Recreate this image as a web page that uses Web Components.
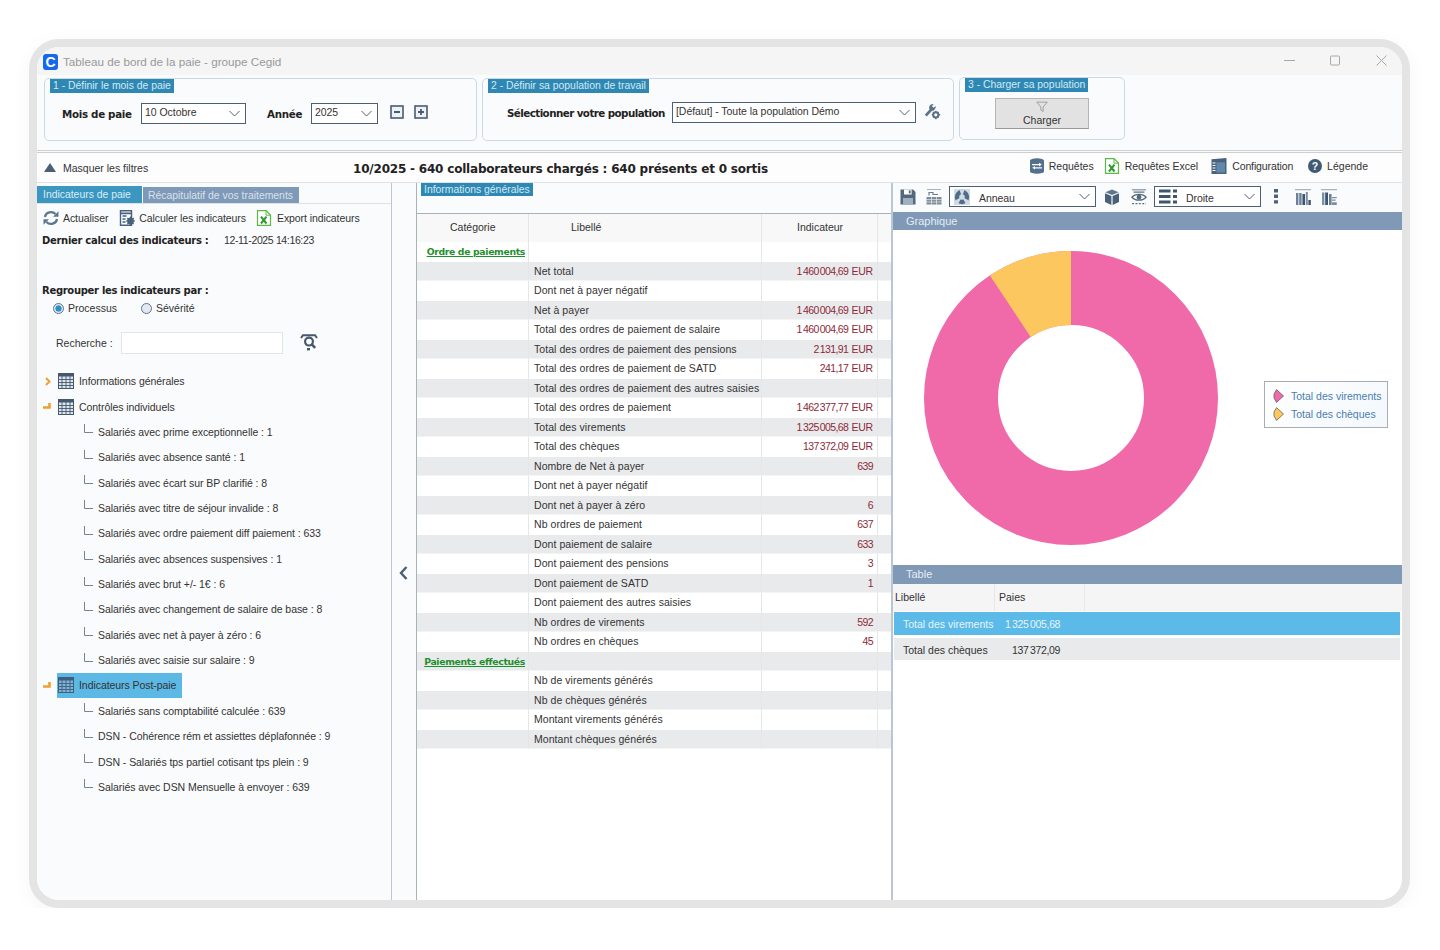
<!DOCTYPE html>
<html lang="fr">
<head>
<meta charset="utf-8">
<title>Tableau de bord de la paie</title>
<style>
  html, body { margin: 0; background: #fff; }
  body { padding: 39px 0 0 29px; font: 10.5px "Liberation Sans", Arial, sans-serif; color: #333; }
</style>
</head>
<body>
<cg-window>
  <cg-titlebar slot="title" text="Tableau de bord de la paie - groupe Cegid"></cg-titlebar>

  <cg-filters slot="filters">
    <cg-group label="1 - Définir le mois de paie" w="433" pad="10px 0 0 17px">
      <cg-bold style="width:79px">Mois de paie</cg-bold>
      <cg-select w="105">10 Octobre</cg-select>
      <cg-bold style="width:44px;margin-left:21px">Année</cg-bold>
      <cg-select w="67">2025</cg-select>
      <cg-icon name="minus" size="14" style="margin:-3px 0 0 12px"></cg-icon>
      <cg-icon name="plus" size="14" style="margin:-3px 0 0 10px"></cg-icon>
    </cg-group>
    <cg-group label="2 - Définir sa population de travail" w="472" pad="9px 0 0 24px" shift="0">
      <cg-bold style="width:165px;letter-spacing:-.55px">Sélectionner votre population</cg-bold>
      <cg-select w="244">[Défaut] - Toute la population Démo</cg-select>
      <cg-icon name="wrench" size="17" style="margin:-2px 0 0 8px"></cg-icon>
    </cg-group>
    <cg-group label="3 - Charger sa population" w="166" pad="6px 0 0 35px" shift="-1">
      <cg-charge></cg-charge>
    </cg-group>
  </cg-filters>

  <cg-statusbar slot="status" headline="10/2025 - 640 collaborateurs chargés : 640 présents et 0 sortis">
    <cg-action icon="requetes" gap="4" style="margin-right:10px">Requêtes</cg-action>
    <cg-action icon="excel" gap="5" style="margin-right:13px">Requêtes Excel</cg-action>
    <cg-action icon="config" gap="5" style="margin-right:14px;letter-spacing:-.12px">Configuration</cg-action>
    <cg-action icon="help" gap="4" style="margin-right:34px">Légende</cg-action>
  </cg-statusbar>

  <cg-left slot="left"></cg-left>
  <cg-splitter slot="splitter"></cg-splitter>
  <cg-grid slot="center"></cg-grid>
  <cg-chart slot="right"></cg-chart>
</cg-window>

<script>
const ICONS = {
  grid: `<rect x=".5" y=".5" width="15" height="15" fill="#dfe5ec" stroke="#46586e"/><rect x="0" y="0" width="16" height="3.5" fill="#46586e"/><path d="M4 3v13M8 3v13M12 3v13M0 6.5h16M0 9.5h16M0 12.5h16" stroke="#46586e" stroke-width=".9"/>`,
  gridSel: `<rect x=".5" y=".5" width="15" height="15" fill="#7fb4d4" stroke="#3f5f7e"/><rect x="0" y="0" width="16" height="3.5" fill="#3f5f7e"/><path d="M4 3v13M8 3v13M12 3v13M0 6.5h16M0 9.5h16M0 12.5h16" stroke="#3f5f7e" stroke-width=".9"/>`,
  refresh: `<path d="M2 7a6 5.5 0 0 1 10.5-3" fill="none" stroke="#5c7690" stroke-width="2.2"/><path d="M15.5 1.2v5.6H10z" fill="#5c7690"/><path d="M14 9a6 5.5 0 0 1-10.5 3" fill="none" stroke="#5c7690" stroke-width="2.2"/><path d="M.5 14.8V9.2H6z" fill="#5c7690"/>`,
  calc: `<path d="M1.5.8h11v14.4h-11z" fill="#fff" stroke="#46627f" stroke-width="1.4"/><path d="M1 3.4h12" stroke="#46627f" stroke-width="1.6"/><path d="M3.5 6h4M3.5 9h3M3.5 12h3" stroke="#46627f" stroke-width="1.6"/><circle cx="11.5" cy="11" r="3.4" fill="#46627f"/><circle cx="11.5" cy="11" r="1.3" fill="#fff"/><path d="M11.5 6.4v9.2M6.9 11h9.2M8.3 7.8l6.4 6.4M14.7 7.8l-6.4 6.4" stroke="#46627f" stroke-width="1.1"/>`,
  excel: `<path d="M1.5.7h8.6l4.4 4.4v10.2h-13z" fill="#fff" stroke="#5cb947" stroke-width="1.2"/><path d="M10 .7v4.5h4.5" fill="none" stroke="#5cb947"/><path d="M5 6.7l5.5 6.8M10.5 6.7L5 13.5" stroke="#2c9a2c" stroke-width="2"/>`,
  requetes: `<ellipse cx="8" cy="2.6" rx="7" ry="2.4" fill="#53708d"/><rect x="1" y="2.6" width="14" height="11" fill="#53708d"/><ellipse cx="8" cy="13.4" rx="7" ry="2.4" fill="#53708d"/><path d="M3 6.6h8M13 9.8H5" stroke="#fff" stroke-width="1.2"/><path d="M10 4.8l2.8 1.8L10 8.4zM6 8l-2.8 1.8L6 11.6z" fill="#fff"/>`,
  config: `<path d="M.5 1.2L15.5 0v16H.5z" fill="#46627f"/><rect x="5.4" y="4.3" width="8.6" height="10.3" fill="#6287a9"/><path d="M1.5 5h3M1.5 7.5h3M1.5 10h3M1.5 12.5h3" stroke="#fff" stroke-width="1"/>`,
  help: `<circle cx="8" cy="8" r="7" fill="#3f5a75"/><text x="8" y="11.6" text-anchor="middle" font-family="Liberation Sans" font-weight="bold" font-size="10.5" fill="#fff">?</text>`,
  minus: `<rect x="1" y="1" width="12" height="12" fill="#eef2f6" stroke="#4a5c70" stroke-width="1.6"/><path d="M4 7h6" stroke="#4a5c70" stroke-width="1.8"/>`,
  plus: `<rect x="1" y="1" width="12" height="12" fill="#eef2f6" stroke="#4a5c70" stroke-width="1.6"/><path d="M4 7h6M7 4v6" stroke="#4a5c70" stroke-width="1.8"/>`,
  wrench: `<path d="M1.8 12.6L7.4 6.4" stroke="#5c7287" stroke-width="2.8" fill="none"/><path d="M6 7.2a3.8 3.8 0 0 1 3.6-6.2L8 3.2l1.6 1.5 2-1.8a3.8 3.8 0 0 1-5.6 4.3z" fill="#5c7287"/><circle cx="11.8" cy="11.8" r="2.6" fill="none" stroke="#5c7287" stroke-width="2"/><path d="M11.8 7.8v1.4M11.8 14.4v1.8M7.8 11.8h1.4M14.4 11.8h1.8M9 9l1 1M13.6 13.6l1 1M14.6 9l-1 1M10 13.6l-1 1" stroke="#5c7287" stroke-width="1.4"/>`,
  lens: `<path d="M1 4L3 1.2h12L17 4" fill="none" stroke="#46586e" stroke-width="2"/><circle cx="9" cy="7.6" r="3.9" fill="#fff" stroke="#46586e" stroke-width="2.2"/><path d="M12 10.6l3.2 3.2" stroke="#46586e" stroke-width="2.6"/><path d="M7 14h3v2.4H7z" fill="#46586e"/>`,
  save: `<path d="M.5.5h12.6l2.4 2.4v12.6H.5z" fill="#51687f"/><rect x="4" y=".5" width="7.6" height="5" fill="#fff"/><rect x="8.8" y="1.4" width="1.8" height="3" fill="#51687f"/><rect x="3" y="9" width="10" height="6.5" fill="#9fb0c1"/>`,
  table: `<path d="M1 .5h14" stroke="#a9b3bd"/><path d="M3 6.5V3.5h4v2h5" fill="none" stroke="#6b7f93" stroke-width="1.2"/><rect x=".5" y="8" width="15" height="7.5" fill="#7d8b99"/><path d="M5.5 8v8M10.5 8v8M0 10.6h16M0 13h16" stroke="#dfe3e7" stroke-width=".8"/>`,
  ring: `<rect width="16" height="16" fill="#d2dbe4"/><circle cx="8" cy="8" r="5" fill="none" stroke="#4f6d8a" stroke-width="4.4"/><path d="M8 8L5.6 1h4.8zM8 8l6.6 3.2-2.6 3.8zM8 8l-6.6 3.2L4 15z" fill="#d2dbe4"/>`,
  cube: `<path d="M8 .6l6.6 2.6L8 5.9 1.4 3.2z" fill="#5c7590"/><path d="M1 4.2l6.4 2.7V16L1 12.9z" fill="#4a6078"/><path d="M15 4.2L8.6 6.9V16l6.4-3.1z" fill="#4a6078"/>`,
  eye: `<path d="M1 .8h14" stroke="#9aa6b1" stroke-width="1.4"/><path d="M2.5 3.2h11" stroke="#5c7287" stroke-width="1.2"/><path d="M1 8.2C4 4.4 12 4.4 15 8.2 12 12 4 12 1 8.2z" fill="#fff" stroke="#55697d" stroke-width="1.4"/><circle cx="8" cy="8.2" r="2.4" fill="#55697d"/><path d="M1 14.6h14" stroke="#5c7287" stroke-width="1.4" stroke-dasharray="2 1.4"/>`,
  list: `<path d="M0 2h11.5M0 7.5h11.5M0 13h11.5" stroke="#3f566e" stroke-width="2.8"/><path d="M14 2h4M14 7.5h4M14 13h4" stroke="#3f566e" stroke-width="2.8"/>`,
  dots: `<path d="M3 0h4v3.4H3zM3 5.6h4V9H3zM3 11.2h4v3.4H3z" fill="#4c6279"/>`,
  bars: `<path d="M0 .6h16" stroke="#a9b3bd" stroke-width="1.2"/><path d="M1 4h2.4v12H1zM4.2 4h2.4v12H4.2z" fill="#6b8199"/><path d="M7.4 5h2.6v11H7.4z" fill="#3d566f"/><path d="M10.8 3h2v13h-2z" fill="#7b90a6"/><path d="M13.4 11h2.4v5h-2.4z" fill="#3d566f"/>`,
  barsH: `<path d="M0 .6h16" stroke="#a9b3bd" stroke-width="1.2"/><path d="M1 3.6h2.4V16H1z" fill="#7b90a6"/><path d="M4.2 3.6h2.8V16H4.2z" fill="#3d566f"/><path d="M8 5h2.6v11H8z" fill="#6b8199"/><path d="M11 8h4.8v1.2H11zM11 10.6h3.6v1.2H11zM11 13.2h4.8V16H11z" fill="#7b90a6"/>`,
  funnel: `<path d="M1 1.5h14L9.5 8v6L6.5 12V8z" fill="none" stroke="#8b8b8b"/>`
};

function shell(host, html) {
  host.attachShadow({ mode: "open" }).innerHTML = html;
}

class CgIcon extends HTMLElement {
  connectedCallback() {
    const size = this.getAttribute("size") || 16;
    const name = this.getAttribute("name");
    const vb = { list: "0 0 18 15", dots: "0 0 10 15", plus: "0 0 14 14", minus: "0 0 14 14", wrench: "0 0 17 17", lens: "0 0 18 17" }[name] || "0 0 16 16";
    shell(this, `<style>:host{display:inline-flex;flex:none}svg{display:block}</style>
      <svg width="${this.getAttribute("w") || size}" height="${size}" viewBox="${vb}">${ICONS[name]}</svg>`);
  }
}

class CgWindow extends HTMLElement {
  constructor() {
    super();
    shell(this, `<style>
      :host{display:block;box-sizing:border-box;width:1381px;height:869px;border:8px solid #e4e4e4;border-radius:30px;background:#e4e4e4;box-shadow:0 5px 22px rgba(0,0,0,.04)}
      .in{height:100%;border-radius:22px;overflow:hidden;background:#fafbfc;display:flex;flex-direction:column}
      .work{flex:1;min-height:0;display:grid;grid-template-columns:355px 24px 477px 1fr;background:#fafbfc}
    </style>
    <div class="in">
      <slot name="title"></slot>
      <slot name="filters"></slot>
      <slot name="status"></slot>
      <div class="work">
        <slot name="left"></slot><slot name="splitter"></slot><slot name="center"></slot><slot name="right"></slot>
      </div>
    </div>`);
  }
}

class CgTitlebar extends HTMLElement {
  connectedCallback() {
    shell(this, `<style>
      :host{display:flex;align-items:center;height:28px;background:#f5f5f5;padding-left:6px;font:11.7px "Liberation Sans",sans-serif;color:#999}
      .logo{width:15px;height:16px;border-radius:3px;background:#1467ee;color:#fff;font:bold 14px/16px "Liberation Sans",sans-serif;text-align:center;margin:1px 5px 0 0}
      .sp{flex:1}
      svg{display:block}
    </style>
    <span class="logo">C</span><span>${this.getAttribute("text")}</span><span class="sp"></span>
    <svg width="113" height="12" viewBox="0 0 113 12" fill="none" stroke="#a8a8a8" style="margin:-3px 5px 0 0">
      <path d="M0 6.5h11"/><rect x="46.5" y="2" width="9" height="9" rx="1"/><path d="M92.5 1.5l10 10M102.5 1.5l-10 10"/>
    </svg>`);
  }
}

class CgFilters extends HTMLElement {
  constructor() {
    super();
    shell(this, `<style>
      :host{display:flex;gap:5px;box-sizing:border-box;height:78px;padding:3px 0 0 7px;background:#fafbfc;border-bottom:3px double #cfcfcf}
    </style><slot></slot>`);
  }
}

class CgGroup extends HTMLElement {
  connectedCallback() {
    const shift = this.getAttribute("shift") || 0;
    shell(this, `<style>
      :host{display:block;box-sizing:border-box;width:${this.getAttribute("w")}px;height:63px;border:1px solid #c9d9e4;border-radius:5px;margin-top:${shift}px}
      .lab{display:inline-block;background:#2f88b3;color:#d2e9f4;font:10.4px/14px "Liberation Sans",sans-serif;padding:0 3px;margin-left:5px;vertical-align:top}
      .body{display:flex;align-items:center;padding:${this.getAttribute("pad")}}
    </style>
    <span class="lab">${this.getAttribute("label")}</span>
    <div class="body"><slot></slot></div>`);
  }
}

class CgBold extends HTMLElement {
  constructor() {
    super();
    shell(this, `<style>:host{display:inline-block;flex:none;padding-top:1px;font:bold 10.3px "DejaVu Sans",sans-serif;letter-spacing:-.3px;color:#222;white-space:nowrap}</style><slot></slot>`);
  }
}

class CgSelect extends HTMLElement {
  connectedCallback() {
    shell(this, `<style>
      :host{display:flex;align-items:center;flex:none;box-sizing:border-box;width:${this.getAttribute("w")}px;height:21px;border:1px solid #4c5f74;background:#fff;padding:0 5px 0 3px;font:10.5px "Liberation Sans",sans-serif;letter-spacing:-.05px;color:#333}
      .t{flex:1;white-space:nowrap;margin-top:-3px}
      ::slotted(cg-icon){margin-right:9px}
    </style><slot name="icon"></slot><span class="t"><slot></slot></span>
    <svg width="11" height="7" viewBox="0 0 11 7" fill="none" stroke="#4c5f74"><path d="M.5 1l5 5 5-5"/></svg>`);
  }
}

class CgCharge extends HTMLElement {
  constructor() {
    super();
    shell(this, `<style>
      :host{display:flex;flex-direction:column;align-items:center;box-sizing:border-box;width:94px;height:31px;background:#e2e2e2;border:1px solid #b5b5b5;border-bottom-color:#999;padding-top:2px;font:10.5px/12px "Liberation Sans",sans-serif;color:#333}
    </style><cg-icon name="funnel" size="12" w="14"></cg-icon><span style="margin-top:1px">Charger</span>`);
  }
}

class CgAction extends HTMLElement {
  connectedCallback() {
    const gap = this.getAttribute("gap") || 4;
    shell(this, `<style>
      :host{display:inline-flex;align-items:center;gap:${gap}px;white-space:nowrap;font:10.5px "Liberation Sans",sans-serif;color:#333}
    </style><cg-icon name="${this.getAttribute("icon")}"></cg-icon><slot></slot>`);
  }
}

class CgStatusbar extends HTMLElement {
  connectedCallback() {
    shell(this, `<style>
      :host{display:flex;align-items:center;box-sizing:border-box;height:30px;padding-left:7px;background:#fdfdfe;border-bottom:1px solid #dfe3e7;font:10.5px "Liberation Sans",sans-serif;color:#333}
      .tri{width:0;height:0;border:6px solid transparent;border-top:0;border-bottom:9px solid #4b6075;margin-right:7px}
      .mask{width:290px;white-space:nowrap}
      h1{margin:0;font:bold 12px "DejaVu Sans",sans-serif;letter-spacing:-.2px;color:#222;white-space:nowrap;margin-top:2px}
      .sp{flex:1}
      .r{display:flex;align-items:center;margin-top:-3px}
    </style>
    <span class="tri"></span><span class="mask">Masquer les filtres</span>
    <h1>${this.getAttribute("headline")}</h1><span class="sp"></span>
    <div class="r"><slot></slot></div>`);
  }
}

class CgRadio extends HTMLElement {
  connectedCallback() {
    const on = this.hasAttribute("checked");
    shell(this, `<style>
      :host{display:inline-flex;align-items:center;gap:4px}
      i{box-sizing:border-box;width:11px;height:11px;border-radius:50%;border:1px solid #5c7690;background:${on ? "radial-gradient(circle,#2f8fc4 0 2.8px,#d8e6f2 3.4px)" : "#e6e8f0"}}
    </style><i></i><slot></slot>`);
  }
}

class CgTreeRow extends HTMLElement {
  connectedCallback() {
    const kind = this.getAttribute("kind");
    const sel = this.hasAttribute("selected");
    const mark = kind === "closed"
      ? `<svg class="m" width="6" height="9" viewBox="0 0 6 9" style="margin:0 0 0 8px"><path d="M1 1l3.5 3.5L1 8" fill="none" stroke="#f0a030" stroke-width="2"/></svg>`
      : `<svg class="m" width="8" height="7" viewBox="0 0 8 7" style="margin:-2px 0 0 6px"><path d="M0 5.5h6.5V1" fill="none" stroke="#f0a030" stroke-width="2.6"/></svg>`;
    const parent = `${mark}<span class="hl" style="margin-left:6px"><cg-icon name="${sel ? "gridSel" : "grid"}"></cg-icon><span class="t"><slot></slot></span></span>`;
    const child = `<svg width="9" height="10" viewBox="0 0 9 10" style="margin:-5px 5px 0 47px"><path d="M.5 0v8.5H9" fill="none" stroke="#75848f"/></svg><span><slot></slot></span>`;
    shell(this, `<style>
      :host{display:flex;align-items:center;height:25.36px;white-space:nowrap;font:10.5px "Liberation Sans",sans-serif;letter-spacing:-.06px;color:#333}
      .hl{display:flex;align-items:center;height:100%;padding-right:6px;${sel ? "background:#5cb8e4;" : ""}}
      cg-icon{margin-left:1px}
      .t{margin-left:5px}
    </style>${kind === "child" ? child : parent}`);
  }
}

class CgLeft extends HTMLElement {
  connectedCallback() {
    const tree = [
      ["closed", "Informations générales"],
      ["open", "Contrôles individuels"],
      ["child", "Salariés avec prime exceptionnelle : 1"],
      ["child", "Salariés avec absence santé : 1"],
      ["child", "Salariés avec écart sur BP clarifié : 8"],
      ["child", "Salariés avec titre de séjour invalide : 8"],
      ["child", "Salariés avec ordre paiement diff paiement : 633"],
      ["child", "Salariés avec absences suspensives : 1"],
      ["child", "Salariés avec brut +/- 1€ : 6"],
      ["child", "Salariés avec changement de salaire de base : 8"],
      ["child", "Salariés avec net à payer à zéro : 6"],
      ["child", "Salariés avec saisie sur salaire : 9"],
      ["open", "Indicateurs Post-paie", true],
      ["child", "Salariés sans comptabilité calculée : 639"],
      ["child", "DSN - Cohérence rém et assiettes déplafonnée : 9"],
      ["child", "DSN - Salariés tps partiel cotisant tps plein : 9"],
      ["child", "Salariés avec DSN Mensuelle à envoyer : 639"]
    ];
    shell(this, `<style>
      :host{display:block;box-sizing:border-box;border-right:1px solid #b9c6d2;background:#fafbfc;font:10.5px "Liberation Sans",sans-serif;color:#333;min-height:0}
      .tabs{display:flex;align-items:flex-end;height:20px;border-bottom:1px solid #e0e3e6}
      .tabs span{display:block;white-space:nowrap}
      .a{background:#3b96c0;color:#d8eef8;width:105px;height:17px;line-height:17px;padding-left:6px;box-sizing:border-box;font-size:10.4px}
      .b{background:#7f99b8;color:#d9e2ec;width:156px;height:16px;line-height:17px;padding-left:5px;margin-left:1px;box-sizing:border-box;font-size:10.4px}
      .tools{display:flex;align-items:center;padding:5px 0 0 6px;height:18px;letter-spacing:-.08px}
      .calc{display:flex;align-items:baseline;padding:7px 0 0 5px;height:15px}
      .calc span{letter-spacing:-.36px}
      .grp{padding:35px 0 0 5px;height:14px}
      .rad{display:flex;gap:24px;padding:3px 0 0 16px;height:14px}
      .search{display:flex;align-items:center;padding:16px 0 0 19px;height:23px}
      .input{box-sizing:border-box;width:162px;height:22px;background:#fff;border:1px solid #e3e5e8;margin:0 17px 0 8px}
      .tree{padding-top:14.5px}
    </style>
    <div class="tabs"><span class="a">Indicateurs de paie</span><span class="b">Récapitulatif de vos traitements</span></div>
    <div class="tools">
      <cg-action icon="refresh" style="margin-right:11px">Actualiser</cg-action>
      <cg-action icon="calc" style="margin-right:10px">Calculer les indicateurs</cg-action>
      <cg-action icon="excel" gap="5">Export indicateurs</cg-action>
    </div>
    <div class="calc"><cg-bold style="width:182px;font-size:10px;padding-top:0">Dernier calcul des indicateurs :</cg-bold><span>12-11-2025 14:16:23</span></div>
    <div class="grp"><cg-bold style="font-size:10px;padding-top:0">Regrouper les indicateurs par :</cg-bold></div>
    <div class="rad"><cg-radio checked>Processus</cg-radio><cg-radio>Sévérité</cg-radio></div>
    <div class="search"><span>Recherche :</span><span class="input"></span><cg-icon name="lens" size="17" w="18"></cg-icon></div>
    <div class="tree">${tree.map(([k, t, s]) => `<cg-tree-row kind="${k}"${s ? " selected" : ""}>${t}</cg-tree-row>`).join("")}</div>`);
  }
}

class CgSplitter extends HTMLElement {
  constructor() {
    super();
    shell(this, `<style>
      :host{display:flex;align-items:center;justify-content:center;background:#fafbfc;padding:62px 1px 0 0;box-sizing:border-box}
    </style><svg width="9" height="14" viewBox="0 0 9 14"><path d="M7.5 1L2 7l5.5 6" fill="none" stroke="#4a5f75" stroke-width="2.4"/></svg>`);
  }
}

class CgGrid extends HTMLElement {
  connectedCallback() {
    const E = ` <span class="cur">EUR</span>`;
    const rows = [
      ["c", "Ordre de paiements"],
      ["", "Net total", "1 460 004,69" + E],
      ["", "Dont net à payer négatif"],
      ["", "Net à payer", "1 460 004,69" + E],
      ["", "Total des ordres de paiement de salaire", "1 460 004,69" + E],
      ["", "Total des ordres de paiement des pensions", "2 131,91" + E],
      ["", "Total des ordres de paiement de SATD", "241,17" + E],
      ["", "Total des ordres de paiement des autres saisies"],
      ["", "Total des ordres de paiement", "1 462 377,77" + E],
      ["", "Total des virements", "1 325 005,68" + E],
      ["", "Total des chèques", "137 372,09" + E],
      ["", "Nombre de Net à payer", "639"],
      ["", "Dont net à payer négatif"],
      ["", "Dont net à payer à zéro", "6"],
      ["", "Nb ordres de paiement", "637"],
      ["", "Dont paiement de salaire", "633"],
      ["", "Dont paiement des pensions", "3"],
      ["", "Dont paiement de SATD", "1"],
      ["", "Dont paiement des autres saisies"],
      ["", "Nb ordres de virements", "592"],
      ["", "Nb ordres en chèques", "45"],
      ["c", "Paiements effectués"],
      ["", "Nb de virements générés"],
      ["", "Nb de chèques générés"],
      ["", "Montant virements générés"],
      ["", "Montant chèques générés"]
    ];
    shell(this, `<style>
      :host{display:flex;flex-direction:column;box-sizing:border-box;background:#fff;border-left:1px solid #a9b1b9;border-right:2px solid #b9c6d6;font:10.5px "Liberation Sans",sans-serif;color:#333;min-height:0}
      .top{height:30px;background:#fafbfc;flex:none}
      .top span{display:inline-block;background:#2f88b3;color:#d2e9f4;font:10.4px/13px "Liberation Sans",sans-serif;padding:0 3px;margin-left:4px;vertical-align:top}
      .row{display:grid;grid-template-columns:112px 233px 116px 1fr;height:19.53px;line-height:18px;white-space:nowrap}
      .row>*{border-right:1px solid #e4e6e8;box-sizing:border-box}
      .row:nth-child(even){background:#e9eaec}
      .row:nth-child(even)>*{border-bottom:1px solid #f4f4f5}
      .l{padding-left:5px;letter-spacing:.06px}
      .v{padding-right:4px;text-align:right;color:#8c2a38;letter-spacing:-.6px;word-spacing:-1.2px}
      .cur{letter-spacing:-.2px;margin-left:2px}
      .cat{text-align:right;padding-right:3px}
      .cat b{font:bold 9.3px "DejaVu Sans",sans-serif;letter-spacing:-.34px;color:#1f8f2c;text-decoration:underline}
      .head{display:grid;grid-template-columns:112px 233px 116px 1fr;height:29px;line-height:27px;background:#f8f8f8;border-top:1px solid #a9b1b9;box-sizing:border-box;flex:none}
      .head span{border-right:1px solid #e4e6e8;white-space:nowrap}
      .head span:last-child{border-right:0}
    </style>
    <div class="top"><span>Informations générales</span></div>
    <div class="head"><span style="padding-left:33px">Catégorie</span><span style="padding-left:42px">Libellé</span><span style="padding-left:35px">Indicateur</span><span></span></div>
    <div class="rows">${rows.map(([k, a, b]) => k === "c"
      ? `<div class="row"><span class="cat"><b>${a}</b></span><span></span><span></span><span style="border-right:0"></span></div>`
      : `<div class="row"><span></span><span class="l">${a}</span><span class="v">${b || ""}</span><span style="border-right:0"></span></div>`).join("")}</div>`);
  }
}

class CgDonut extends HTMLElement {
  constructor() {
    super();
    // 1 325 005,68 / 137 372,09 : the cheque slice is 9,39 % of the ring
    const r = 110, len = 2 * Math.PI * r, part = len * 137372.09 / 1462377.77;
    shell(this, `<style>:host{display:block;width:294px;height:294px;flex:none}svg{display:block}</style>
      <svg width="294" height="294" viewBox="0 0 294 294">
        <g fill="none" stroke-width="74" transform="rotate(-90 147 147)">
          <circle cx="147" cy="147" r="${r}" stroke="#f06aa9"/>
          <circle cx="147" cy="147" r="${r}" stroke="#fdc75f" stroke-dasharray="${part} ${len - part}" stroke-dashoffset="${part}"/>
        </g>
      </svg>`);
  }
}

class CgChart extends HTMLElement {
  connectedCallback() {
    const tick = (c) => `<svg width="11" height="14" viewBox="0 0 11 14"><path d="M3.5.6l7 6.4-7 6.4L1 9V5z" fill="${c}" stroke="#555" stroke-width=".7"/></svg>`;
    shell(this, `<style>
      :host{display:flex;flex-direction:column;background:#fff;font:10.5px "Liberation Sans",sans-serif;color:#333;min-height:0}
      .tb{display:flex;align-items:center;box-sizing:border-box;height:29px;padding:0 0 2px 7px;background:#fafbfc;flex:none}
      .bar{height:18px;line-height:19px;background:#7f99b6;color:#e6edf4;padding-left:13px;font-size:11px;flex:none}
      .graph{height:335px;display:flex;align-items:flex-start;flex:none;padding-left:31px;box-sizing:border-box;padding-top:21px}
      .leg{box-sizing:border-box;width:124px;height:47px;margin:130px 0 0 46px;padding:5px 0 0 8px;border:1px solid #aaaeb2;background:linear-gradient(135deg,#fff,#f3f8fd);color:#4a7db1;line-height:18px;white-space:nowrap}
      .leg div{display:flex;align-items:center;gap:7px}
      .h{display:grid;grid-template-columns:102px 90px 1fr;height:27px;line-height:27px;background:#f5f5f6;flex:none}
      .h span{border-right:1px solid #e8e8e8;padding-left:2px}
      .h span:nth-child(2){padding-left:4px}
      .h span:last-child{border:0}
      .r{display:grid;grid-template-columns:102px 55px;align-items:center;margin:0 2px 0 1px;padding-left:9px;flex:none;white-space:nowrap}
      .r span:last-child{text-align:right;letter-spacing:-.35px;word-spacing:-1px}
      .s{height:23px;background:#5cbae8;color:#e5f5fc;margin-top:1px}
      .o{height:22px;background:#e9eaeb;margin-top:3px;padding-top:1px;box-sizing:border-box}
    </style>
    <div class="tb">
      <cg-icon name="save"></cg-icon>
      <cg-icon name="table" style="margin-left:10px"></cg-icon>
      <cg-select w="147" style="margin-left:7px;padding-left:4px"><cg-icon slot="icon" name="ring"></cg-icon><span style="position:relative;top:3px">Anneau</span></cg-select>
      <cg-icon name="cube" style="margin-left:8px"></cg-icon>
      <cg-icon name="eye" style="margin-left:11px"></cg-icon>
      <cg-select w="107" style="margin-left:7px;padding-left:4px"><cg-icon slot="icon" name="list" w="18" size="15"></cg-icon><span style="position:relative;top:3px">Droite</span></cg-select>
      <cg-icon name="dots" w="10" size="15" style="margin-left:10px"></cg-icon>
      <cg-icon name="bars" style="margin-left:14px"></cg-icon>
      <cg-icon name="barsH" style="margin-left:10px"></cg-icon>
    </div>
    <div class="bar">Graphique</div>
    <div class="graph">
      <cg-donut></cg-donut>
      <div class="leg"><div>${tick("#f06aa9")}Total des virements</div><div>${tick("#fdc75f")}Total des chèques</div></div>
    </div>
    <div class="bar" style="height:19px">Table</div>
    <div class="h"><span>Libellé</span><span>Paies</span><span></span></div>
    <div class="r s"><span>Total des virements</span><span>1 325 005,68</span></div>
    <div class="r o"><span>Total des chèques</span><span>137 372,09</span></div>`);
  }
}

customElements.define("cg-icon", CgIcon);
customElements.define("cg-window", CgWindow);
customElements.define("cg-titlebar", CgTitlebar);
customElements.define("cg-filters", CgFilters);
customElements.define("cg-group", CgGroup);
customElements.define("cg-bold", CgBold);
customElements.define("cg-select", CgSelect);
customElements.define("cg-charge", CgCharge);
customElements.define("cg-action", CgAction);
customElements.define("cg-statusbar", CgStatusbar);
customElements.define("cg-radio", CgRadio);
customElements.define("cg-tree-row", CgTreeRow);
customElements.define("cg-left", CgLeft);
customElements.define("cg-splitter", CgSplitter);
customElements.define("cg-grid", CgGrid);
customElements.define("cg-donut", CgDonut);
customElements.define("cg-chart", CgChart);
</script>
</body>
</html>
